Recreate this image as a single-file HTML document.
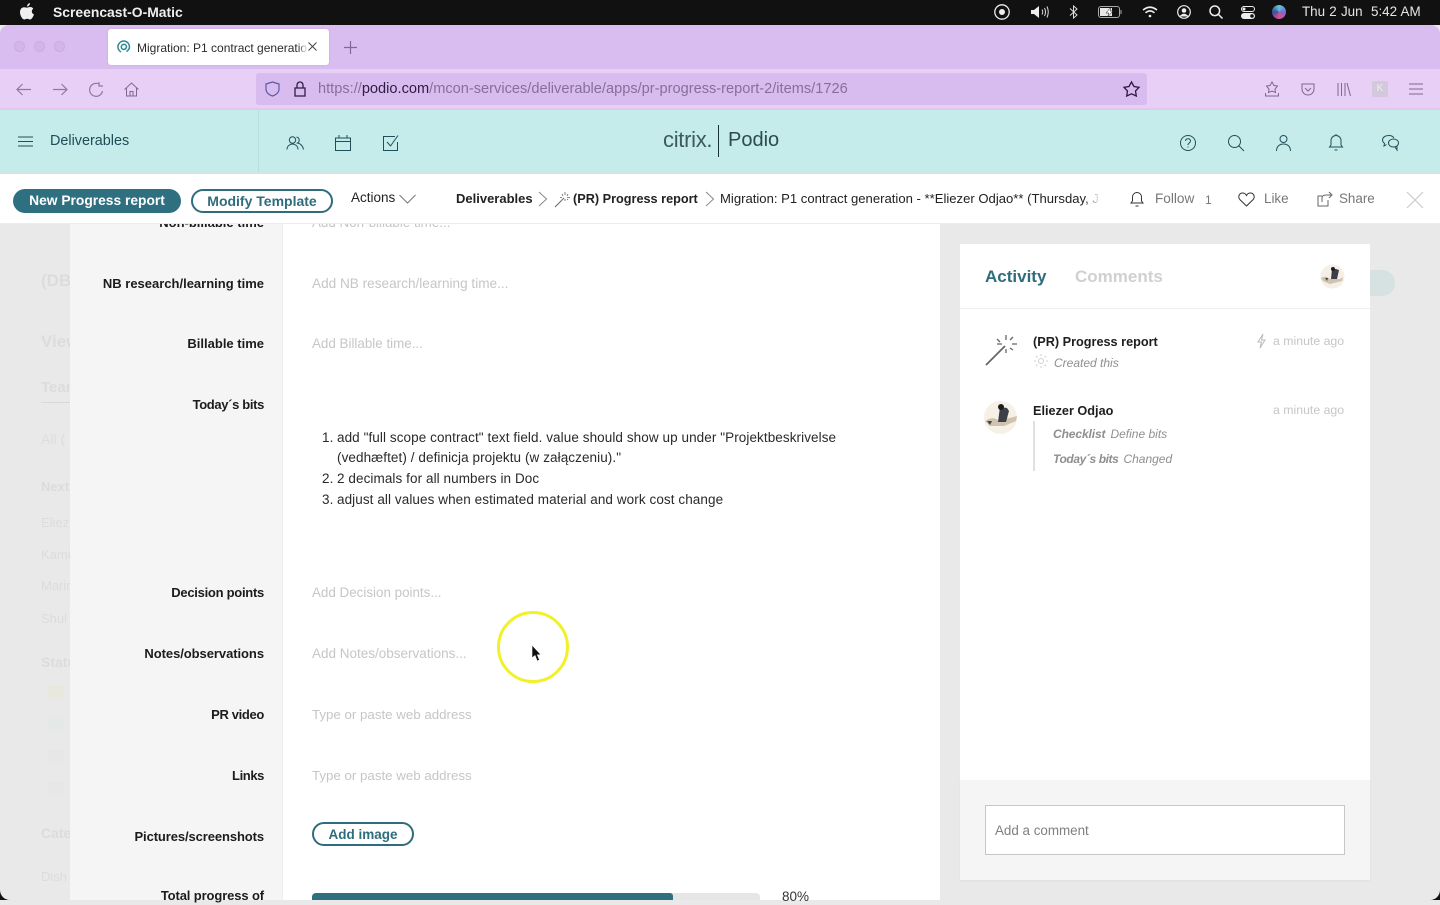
<!DOCTYPE html>
<html><head><meta charset="utf-8"><style>
html,body{margin:0;padding:0;width:1440px;height:900px;overflow:hidden;background:#e9e9e9;font-family:"Liberation Sans","Noto Sans CJK SC",sans-serif;}
.a{position:absolute;white-space:nowrap;}
.t{position:absolute;white-space:nowrap;line-height:16px;}
svg{position:absolute;overflow:visible;fill:none;}
.lab{position:absolute;right:1176px;font-size:13px;font-weight:bold;color:#1c1c1c;line-height:16px;white-space:nowrap;}
.ph{position:absolute;left:312px;font-size:13.4px;color:#c6c6c6;line-height:16px;white-space:nowrap;}
.li{position:absolute;white-space:nowrap;line-height:16px;font-size:13.500px;letter-spacing:.08px;color:#2a2a2a;}
.gh{position:absolute;left:41px;width:29px;overflow:hidden;color:#dcdcdc;font-size:13px;line-height:16px;white-space:nowrap;}
</style></head><body>

<!-- page background ghost -->
<div class="a" style="left:0;top:224px;width:70px;height:676px;background:#e9e9e9"></div>
<div class="gh" style="top:272px;font-size:17px;font-weight:bold;line-height:18px">(DB</div>
<div class="gh" style="top:333px;font-size:17px;font-weight:bold;line-height:18px">View</div>
<div class="gh" style="top:379px;font-size:15px;font-weight:bold;line-height:18px">Team</div>
<div class="a" style="left:41px;top:402px;width:29px;height:1px;background:#d8d8d8"></div>
<div class="gh" style="top:431px;font-size:14px">All (</div>
<div class="gh" style="top:479px;font-weight:bold">Next</div>
<div class="gh" style="top:515px;font-size:13px">Eliezer</div>
<div class="gh" style="top:547px;font-size:13px">Kamil</div>
<div class="gh" style="top:578px;font-size:13px">Marin</div>
<div class="gh" style="top:611px;font-size:13px">Shul</div>
<div class="gh" style="top:654px;font-weight:bold;font-size:14px">Status</div>
<div class="a" style="left:48px;top:686px;width:16px;height:14px;background:#e9e8df"></div>
<div class="a" style="left:48px;top:717px;width:16px;height:14px;background:#e4e9e7"></div>
<div class="a" style="left:48px;top:750px;width:16px;height:14px;background:#e7e7e7"></div>
<div class="a" style="left:48px;top:782px;width:16px;height:14px;background:#e7e7e7"></div>
<div class="gh" style="top:825px;font-weight:bold;font-size:14px">Categ</div>
<div class="gh" style="top:869px;font-size:13px">Dish</div>
<div class="a" style="left:1370px;top:270px;width:25px;height:26px;background:#d5e2e1;border-radius:0 13px 13px 0"></div>

<!-- modal -->
<div class="a" style="left:70px;top:224px;width:212px;height:676px;background:#f5f5f5"></div>
<div class="a" style="left:282px;top:224px;width:658px;height:676px;background:#fff;border-left:1px solid #eee;box-sizing:border-box"></div>

<div class="lab" style="top:215px">Non-billable time</div>
<div class="lab" style="top:276px">NB research/learning time</div>
<div class="lab" style="top:336px">Billable time</div>
<div class="lab" style="top:397px;letter-spacing:-.35px">Today´s bits</div>
<div class="lab" style="top:585px;letter-spacing:-.27px">Decision points</div>
<div class="lab" style="top:646px;letter-spacing:-.06px">Notes/observations</div>
<div class="lab" style="top:707px;letter-spacing:-.35px">PR video</div>
<div class="lab" style="top:768px;letter-spacing:-.4px">Links</div>
<div class="lab" style="top:829px;letter-spacing:-.1px">Pictures/screenshots</div>
<div class="lab" style="top:888px;letter-spacing:-.12px">Total progress of</div>

<div class="ph" style="top:215px">Add Non-billable time...</div>
<div class="ph" style="top:276px;font-size:13.6px">Add NB research/learning time...</div>
<div class="ph" style="top:336px">Add Billable time...</div>
<div class="ph" style="top:585px">Add Decision points...</div>
<div class="ph" style="top:646px;font-size:13.5px">Add Notes/observations...</div>
<div class="ph" style="top:707px;font-size:13.3px">Type or paste web address</div>
<div class="ph" style="top:768px;font-size:13.3px">Type or paste web address</div>

<div class="li" style="left:322px;top:430px">1.</div>
<div class="li" style="left:337px;top:430px">add "full scope contract" text field. value should show up under "Projektbeskrivelse</div>
<div class="li" style="left:337px;top:450px">(vedhæftet) / definicja projektu (w załączeniu)."</div>
<div class="li" style="left:322px;top:471px">2.</div>
<div class="li" style="left:337px;top:471px">2 decimals for all numbers in Doc</div>
<div class="li" style="left:322px;top:492px">3.</div>
<div class="li" style="left:337px;top:492px">adjust all values when estimated material and work cost change</div>

<div class="a" style="left:312px;top:822px;width:102px;height:24px;box-sizing:border-box;border:2px solid #2f6c7c;border-radius:12px;background:#fff;color:#2f6c7c;font-size:13.5px;font-weight:bold;text-align:center;line-height:21px">Add image</div>

<div class="a" style="left:312px;top:893px;width:448px;height:7px;background:#e6e6e6;border-radius:4px 4px 0 0"></div>
<div class="a" style="left:312px;top:893px;width:361px;height:7px;background:#2f7080;border-radius:4px 3px 0 0"></div>
<div class="t" style="left:782px;top:889px;font-size:13.5px;color:#333">80%</div>

<!-- cursor highlight -->
<div class="a" style="left:497px;top:611px;width:72px;height:72px;box-sizing:border-box;border:3px solid #f1f12a;border-radius:50%"></div>
<svg style="left:531px;top:645px" width="12" height="18" viewBox="0 0 12 18"><path d="M1 0V13L4 10.500L6.200 16L8.500 15L6.300 9.800H10Z" fill="#111" stroke="#fff" stroke-width=".6"/></svg>

<!-- activity panel -->
<div class="a" style="left:960px;top:244px;width:410px;height:536px;background:#fff"></div>
<div class="a" style="left:960px;top:308px;width:410px;height:1px;background:#eee"></div>
<div class="a" style="left:960px;top:780px;width:410px;height:100px;background:#f5f5f5;box-shadow:0 1px 2px #e0e0e0"></div>
<div class="t" style="left:985px;top:268px;font-size:17px;font-weight:bold;color:#2f6c7c;line-height:18px">Activity</div>
<div class="t" style="left:1075px;top:268px;font-size:17px;font-weight:bold;color:#d0d0d0;line-height:18px">Comments</div>

<svg style="left:1320px;top:264px" width="25" height="25" viewBox="0 0 25 25"><circle cx="12.500" cy="12.500" r="12" fill="#f5efe6"/><path d="M1 14Q6 11 10 15L20 15 23 13 22 17 10 20 3 17Z" fill="#cfc2ae"/><path d="M12 5l4 0 3 1-2 9-6 0z" fill="#3b3f48"/><circle cx="13" cy="5" r="2" fill="#1e1e1e"/><path d="M5 14l3 0-1 3z" fill="#444"/></svg>

<svg style="left:985px;top:333px" width="33" height="33" viewBox="0 0 33 33" stroke="#666" stroke-width="1.300"><path d="M1 32L20 13" stroke-width="1.800"/><path d="M21 2V7M21 16V20M25 7L28 4M25 15L28 17M15 9L12 6M27 11H32M12 11H17"/></svg>
<div class="t" style="left:1033px;top:334px;font-size:12.700px;font-weight:bold;color:#1e1e1e">(PR) Progress report</div>
<svg style="left:1034px;top:354px" width="14" height="14" viewBox="0 0 14 14" stroke="#cfcfcf"><circle cx="7" cy="7" r="2.500"/><path d="M7 0V2M7 12V14M0 7H2M12 7H14M2 2L3.500 3.500M10.500 10.500L12 12M2 12L3.500 10.500M10.500 3.500L12 2"/></svg>
<div class="t" style="left:1054px;top:355px;font-size:12px;font-style:italic;color:#8f8f8f">Created this</div>
<svg style="left:1256px;top:333px" width="11" height="16" viewBox="0 0 11 16" stroke="#bbb"><path d="M7 1L2 9H5.500L4 15L9 7H5.500Z"/></svg>
<div class="t" style="left:1273px;top:333px;font-size:12.300px;color:#c6c6c6">a minute ago</div>

<svg style="left:984px;top:401px" width="33" height="33" viewBox="0 0 33 33"><circle cx="16.500" cy="16.500" r="16.500" fill="#f6f0e6"/><path d="M1 20Q8 15 14 19L26 17 33 15 32 20 20 25 6 25Z" fill="#cfc2ae"/><path d="M16 6l7 1 2 3-3 11-8 0z" fill="#3c4048"/><circle cx="17" cy="6" r="3" fill="#1c1c1c"/><path d="M3 20l5 0-2 4z" fill="#444"/></svg>
<div class="t" style="left:1033px;top:403px;font-size:12.700px;font-weight:bold;color:#1e1e1e">Eliezer Odjao</div>
<div class="t" style="left:1273px;top:402px;font-size:12.300px;color:#c6c6c6">a minute ago</div>
<div class="a" style="left:1033px;top:421px;width:2px;height:50px;background:#e0e0e0"></div>
<div class="t" style="left:1053px;top:426px;font-size:12px;font-style:italic;color:#8f8f8f"><b style="letter-spacing:-.1px">Checklist</b><span style="margin-left:5px">Define bits</span></div>
<div class="t" style="left:1053px;top:451px;font-size:12px;font-style:italic;color:#8f8f8f"><b style="letter-spacing:-.4px">Today´s bits</b><span style="margin-left:5px">Changed</span></div>

<div class="a" style="left:985px;top:805px;width:360px;height:50px;box-sizing:border-box;border:1px solid #c6c6c6;background:#fff;color:#808080;font-size:13.4px;line-height:49px;padding-left:9px">Add a comment</div>

<!-- action bar -->
<div class="a" style="left:0;top:174px;width:1440px;height:50px;background:#fff;border-bottom:1px solid #ececec;box-sizing:border-box"></div>
<div class="a" style="left:13px;top:189px;width:168px;height:24px;border-radius:12px;background:#2f7080;color:#fff;font-size:13.8px;font-weight:bold;text-align:center;line-height:23px">New Progress report</div>
<div class="a" style="left:191px;top:189px;width:142px;height:24px;box-sizing:border-box;border:2px solid #2f6c7c;border-radius:12px;color:#2f6c7c;font-size:14px;font-weight:bold;text-align:center;line-height:20px">Modify Template</div>
<div class="t" style="left:351px;top:190px;font-size:13.500px;color:#222">Actions</div>
<svg style="left:399px;top:194px" width="17" height="10" viewBox="0 0 17 10" stroke="#777"><path d="M.500 1L8.500 9L16.500 1"/></svg>
<div class="t" style="left:456px;top:191px;font-size:13px;font-weight:bold;color:#222">Deliverables</div>
<svg style="left:538px;top:191px" width="10" height="16" viewBox="0 0 10 16" stroke="#888"><path d="M1 1L8.500 8L1 15"/></svg>
<svg style="left:554px;top:191px" width="17" height="17" viewBox="0 0 17 17" stroke="#666"><path d="M1 16L10 7"/><path d="M11 1V4M11 8V10M14 3L13 5M14 9L13 8M8 3L9 5M13 6.500H16M6 6.500H8" stroke-width=".8"/></svg>
<div class="t" style="left:573px;top:191px;font-size:12.700px;font-weight:bold;color:#222">(PR) Progress report</div>
<svg style="left:705px;top:191px" width="10" height="16" viewBox="0 0 10 16" stroke="#888"><path d="M1 1L8.500 8L1 15"/></svg>
<div class="a" style="left:720px;top:191px;width:380px;overflow:hidden;font-size:13.100px;color:#222;line-height:16px">Migration: P1 contract generation - **Eliezer Odjao** (Thursday, June</div>
<div class="a" style="left:1085px;top:188px;width:15px;height:22px;background:linear-gradient(to right,rgba(255,255,255,0),#fff)"></div>
<svg style="left:1130px;top:191px" width="14" height="16" viewBox="0 0 14 16" stroke="#333"><path d="M1 12H13L11.500 10V6A4.500 4.500 0 0 0 2.500 6V10ZM5.500 15H8.500M7 1V2"/></svg>
<div class="t" style="left:1155px;top:191px;font-size:13.600px;color:#777">Follow</div>
<div class="t" style="left:1205px;top:192px;font-size:12px;color:#777">1</div>
<svg style="left:1238px;top:192px" width="17" height="15" viewBox="0 0 17 15" stroke="#333"><path d="M8.500 14L1.800 7.500C-.5 4.500 1.500 1 4.500 1C6.500 1 7.800 2 8.500 3.500C9.200 2 10.500 1 12.500 1C15.500 1 17.500 4.500 15.200 7.500Z"/></svg>
<div class="t" style="left:1264px;top:191px;font-size:13.400px;color:#777">Like</div>
<svg style="left:1317px;top:191px" width="16" height="16" viewBox="0 0 16 16" stroke="#666"><path d="M5 5H1V15H11V9M5 11V7Q5 4 9 4H15M12 1L15 4L12 7"/></svg>
<div class="t" style="left:1339px;top:191px;font-size:13.400px;color:#777">Share</div>
<svg style="left:1407px;top:192px" width="16" height="16" viewBox="0 0 16 16" stroke="#ccc" stroke-width="1.200"><path d="M0 0L16 16M16 0L0 16"/></svg>

<!-- podio header -->
<div class="a" style="left:0;top:110px;width:1440px;height:64px;background:#c5ecea;border-bottom:2px solid #cfe8e2;box-sizing:border-box"></div>
<div class="a" style="left:258px;top:110px;width:1px;height:62px;background:#b8dedc"></div>
<svg style="left:18px;top:136px" width="15" height="11" viewBox="0 0 15 11" stroke="#1f4f58"><path d="M0 1H15M0 5.500H15M0 10H15"/></svg>
<div class="t" style="left:50px;top:133px;font-size:14.400px;color:#1e4d58">Deliverables</div>
<svg style="left:287px;top:136px" width="17" height="14" viewBox="0 0 17 14" stroke="#1f4f58"><circle cx="5.500" cy="4" r="3.200"/><path d="M0 13.500C0 10 3 8 5.500 8C8 8 11 10 11 13.500M9.500 1A3.200 3.200 0 0 1 10.500 7C13.500 7.500 16 10 16.500 13.500"/></svg>
<svg style="left:335px;top:135px" width="16" height="16" viewBox="0 0 16 16" stroke="#1f4f58"><path d="M.500 3H15.500V15.500H.500ZM.500 6.500H15.500M4 0V3M12 0V3"/></svg>
<svg style="left:383px;top:135px" width="16" height="16" viewBox="0 0 16 16" stroke="#1f4f58"><path d="M14.500 7V15.500H.500V1.500H12M4 7L7.500 11L15 .5"/></svg>
<div class="t" style="left:663px;top:129px;font-size:22px;line-height:22px;color:#3d5a60;letter-spacing:-.3px">citrix.</div>
<div class="a" style="left:718px;top:125px;width:1px;height:32px;background:#17343a"></div>
<div class="t" style="left:728px;top:129px;font-size:20px;line-height:22px;color:#2c4a50">Podio</div>
<svg style="left:1180px;top:135px" width="16" height="16" viewBox="0 0 16 16" stroke="#1f4f58"><circle cx="8" cy="8" r="7.500"/><path d="M5.500 6C5.500 3 10.500 3 10.500 6C10.500 8 8 8 8 10M8 11.500V12.500"/></svg>
<svg style="left:1228px;top:135px" width="16" height="16" viewBox="0 0 16 16" stroke="#1f4f58"><circle cx="6.500" cy="6.500" r="6"/><path d="M11 11L16 16"/></svg>
<svg style="left:1276px;top:135px" width="15" height="16" viewBox="0 0 15 16" stroke="#1f4f58"><circle cx="7.500" cy="4" r="3.500"/><path d="M.500 16C.500 11 4 9 7.500 9C11 9 14.500 11 14.500 16"/></svg>
<svg style="left:1329px;top:134px" width="14" height="17" viewBox="0 0 14 17" stroke="#1f4f58"><path d="M.500 13H13.500L12 11V6.500A5 5 0 0 0 2 6.500V11ZM5.500 16H8.500M7 0V1.500"/></svg>
<svg style="left:1382px;top:135px" width="17" height="16" viewBox="0 0 17 16" stroke="#1f4f58"><path d="M7 .5C3 .5.500 2.500.500 5C.500 6.500 1.500 7.500 2.500 8.500L2 11L4.500 9.500"/><path d="M7 .5C9.500 .5 11 1.500 12 3"/><ellipse cx="11.500" cy="8" rx="5" ry="4"/><path d="M13 12L15 15L15 10.500"/></svg>

<!-- browser nav -->
<div class="a" style="left:0;top:69px;width:1440px;height:41px;background:#e8cff6;border-bottom:2px solid #e3c8ee;box-sizing:border-box"></div>
<div class="a" style="left:256px;top:73px;width:891px;height:32px;background:#d9bcef;border-radius:3px"></div>
<svg style="left:16px;top:83px" width="15" height="13" viewBox="0 0 15 13" stroke="#8d7a9c" stroke-width="1.200"><path d="M15 6.500H1M6.500 1L1 6.500L6.500 12"/></svg>
<svg style="left:53px;top:83px" width="15" height="13" viewBox="0 0 15 13" stroke="#8d7a9c" stroke-width="1.200"><path d="M0 6.500H14M8.500 1L14 6.500L8.500 12"/></svg>
<svg style="left:89px;top:82px" width="15" height="15" viewBox="0 0 15 15" stroke="#8d7a9c" stroke-width="1.200"><path d="M13.500 9A6.500 6.500 0 1 1 10 2M10 0V4H14"/></svg>
<svg style="left:124px;top:82px" width="15" height="15" viewBox="0 0 15 15" stroke="#7d6a8c"><path d="M.5 7.500L7.500 1L14.500 7.500M2.500 6V14H12.500V6M6 14V9.500H9V14"/></svg>
<svg style="left:265px;top:81px" width="15" height="16" viewBox="0 0 15 16" stroke="#5d5aa8" stroke-width="1.200"><path d="M7.500 1L14 3V8C14 11.500 11 14 7.500 15C4 14 1 11.500 1 8V3Z"/></svg>
<svg style="left:294px;top:81px" width="12" height="16" viewBox="0 0 12 16" stroke="#2d1b46" stroke-width="1.300"><path d="M1 7H11V15H1ZM3 7V4A3 3 0 0 1 9 4V7"/></svg>
<div class="t" style="left:318px;top:81px;font-size:14.600px;color:#84709a">https://<span style="color:#2c1c40">podio.com</span>/mcon-services/deliverable/apps/pr-progress-report-2/items/1726</div>
<svg style="left:1123px;top:81px" width="17" height="16" viewBox="0 0 17 16" stroke="#2d1b46" stroke-width="1.300"><path d="M8.500 1L11 5.500L16 6.300L12.500 10L13.300 15L8.500 12.800L3.700 15L4.500 10L1 6.300L6 5.500Z"/></svg>
<svg style="left:1265px;top:81px" width="14" height="16" viewBox="0 0 14 16" stroke="#7d6a8c"><path d="M7 1L9 4.500L12.500 5L10 8L10.500 11.500L7 10L3.500 11.500L4 8L1.500 5L5 4.500ZM.500 12V15H13.500V12"/></svg>
<svg style="left:1301px;top:83px" width="14" height="13" viewBox="0 0 14 13" stroke="#7d6a8c"><path d="M1 1H13V6A6 6 0 0 1 1 6ZM4 5L7 8L10 5"/></svg>
<svg style="left:1337px;top:82px" width="14" height="14" viewBox="0 0 14 14" stroke="#7d6a8c"><path d="M1 1V14M4.500 1V14M8 1V14M10 1L13.500 14"/></svg>
<div class="a" style="left:1372px;top:81px;width:16px;height:16px;background:#d4c9dc;border-radius:2px;color:#eee;font-size:10px;text-align:center;line-height:16px">K</div>
<svg style="left:1409px;top:83px" width="14" height="12" viewBox="0 0 14 12" stroke="#7d6a8c"><path d="M0 1H14M0 6H14M0 11H14"/></svg>

<!-- tab bar -->
<div class="a" style="left:0;top:25px;width:1440px;height:44px;background:#dabdf0;border-radius:9px 9px 0 0"></div>
<div class="a" style="left:0;top:0;width:1440px;height:25px;background:#111"></div>
<div class="a" style="left:14px;top:41px;width:11px;height:11px;border-radius:50%;background:#d4b6e6;border:1px solid #cbabdf;box-sizing:border-box"></div>
<div class="a" style="left:34px;top:41px;width:11px;height:11px;border-radius:50%;background:#d4b6e6;border:1px solid #cbabdf;box-sizing:border-box"></div>
<div class="a" style="left:54px;top:41px;width:11px;height:11px;border-radius:50%;background:#d4b6e6;border:1px solid #cbabdf;box-sizing:border-box"></div>
<div class="a" style="left:108px;top:29px;width:221px;height:36px;background:#fff;border-radius:3px;box-shadow:0 0 2px #c6a8da"></div>
<svg style="left:117px;top:40px" width="14" height="14" viewBox="0 0 14 14" stroke="#2f8a90" stroke-width="1.500"><path d="M4 12A5.800 5.800 0 1 1 12.500 7C12.500 9 11 10.500 9.500 11.500"/><path d="M7 9.500A2.600 2.600 0 1 1 9.500 6.500C9.500 8 8.500 9 7 9.500Z"/></svg>
<div class="a" style="left:137px;top:40px;width:171px;overflow:hidden;font-size:12px;color:#2b2b2b;line-height:16px">Migration: P1 contract generation - **Eliezer</div>
<div class="a" style="left:298px;top:38px;width:10px;height:20px;background:linear-gradient(to right,rgba(255,255,255,0),#fff)"></div>
<svg style="left:308px;top:42px" width="9" height="9" viewBox="0 0 9 9" stroke="#444"><path d="M.5 .5L8.500 8.500M8.500 .5L.5 8.500"/></svg>
<svg style="left:344px;top:41px" width="13" height="13" viewBox="0 0 13 13" stroke="#7f6a90" stroke-width="1.200"><path d="M6.500 0V13M0 6.500H13"/></svg>

<!-- mac menu bar -->
<svg style="left:20px;top:3px" width="14" height="17" viewBox="0 0 14 17"><path d="M10 0C10 2 8.500 3.500 7 3.500C7 2 8.200 .4 10 0ZM7.200 4.600C8.200 4.600 9 4 10.300 4C11.500 4 12.600 4.600 13.300 5.700C11 7 11.500 10.500 14 11.400C13.300 13.500 11.800 16.500 10 16.500C9 16.500 8.500 15.800 7.200 15.800C6 15.800 5.400 16.500 4.400 16.500C2.400 16.500 0 12.500 0 9.200C0 6 2 4.200 4 4.200C5.300 4.200 6.200 4.600 7.200 4.600Z" fill="#f0f0f0"/></svg>
<div class="t" style="left:53px;top:4px;font-size:13.900px;font-weight:bold;color:#efefef">Screencast-O-Matic</div>
<svg style="left:994px;top:4px" width="16" height="16" viewBox="0 0 16 16" stroke="#eee" stroke-width="1.300"><circle cx="8" cy="8" r="7.200"/><circle cx="8" cy="8" r="3" fill="#eee" stroke="none"/></svg>
<svg style="left:1031px;top:5px" width="19" height="14" viewBox="0 0 19 14" stroke="#ddd"><path d="M0 5H3L8 1V13L3 9H0Z" fill="#eee" stroke="none"/><path d="M11 4.500Q12.500 7 11 9.500M13.500 3Q15.500 7 13.500 11M16 1.500Q18.500 7 16 12.500"/></svg>
<svg style="left:1069px;top:5px" width="9" height="14" viewBox="0 0 9 14" stroke="#ddd"><path d="M1 3.500L8 10L4.500 13V1L8 4L1 10.500"/></svg>
<svg style="left:1098px;top:6px" width="25" height="12" viewBox="0 0 25 12"><rect x=".5" y=".5" width="21" height="11" rx="2.500" stroke="#aaa"/><rect x="2" y="2" width="12" height="8" fill="#e8e8e8"/><path d="M13 1L8 7H11L9.500 11L15 5H12Z" fill="#fff" stroke="#111" stroke-width=".5"/><path d="M23 4V8" stroke="#aaa"/></svg>
<svg style="left:1142px;top:6px" width="16" height="12" viewBox="0 0 16 12" stroke="#eee" stroke-width="1.600"><path d="M1 4Q8 -1.500 15 4M3.500 6.800Q8 3 12.500 6.800"/><circle cx="8" cy="10" r="1.300" fill="#eee" stroke="none"/></svg>
<svg style="left:1177px;top:5px" width="14" height="14" viewBox="0 0 14 14"><circle cx="7" cy="7" r="6.300" stroke="#eee" stroke-width="1.200"/><circle cx="7" cy="5.500" r="2.300" fill="#eee"/><path d="M3 11.500Q7 7 11 11.500" fill="#eee" stroke="#eee"/></svg>
<svg style="left:1209px;top:5px" width="14" height="14" viewBox="0 0 14 14" stroke="#eee" stroke-width="1.500"><circle cx="5.800" cy="5.800" r="4.800"/><path d="M9.500 9.500L13.500 13.500"/></svg>
<svg style="left:1241px;top:6px" width="14" height="13" viewBox="0 0 14 13"><rect x=".5" y=".5" width="13" height="5" rx="2.500" stroke="#eee"/><rect x="0" y="7" width="14" height="6" rx="3" fill="#eee"/><circle cx="3" cy="3" r="1.500" fill="#eee"/><circle cx="11" cy="10" r="1.800" fill="#111"/></svg>
<div class="a" style="left:1272px;top:5px;width:14px;height:14px;border-radius:50%;background:conic-gradient(#5ac8d8,#7f67c9,#d2528f,#3a4c9c,#5ac8d8)"></div>
<div class="t" style="left:1302px;top:4px;font-size:13.400px;color:#e6e6e6;word-spacing:.5px">Thu 2 Jun&nbsp; 5:42 AM</div>

<!-- display rounded bottom corners -->
<svg style="left:0;top:890px" width="10" height="10" viewBox="0 0 10 10"><path d="M0 0V10H10A10 10 0 0 1 0 0Z" fill="#111"/></svg>
<svg style="left:1430px;top:890px" width="10" height="10" viewBox="0 0 10 10"><path d="M10 0V10H0A10 10 0 0 0 10 0Z" fill="#111"/></svg>
</body></html>
